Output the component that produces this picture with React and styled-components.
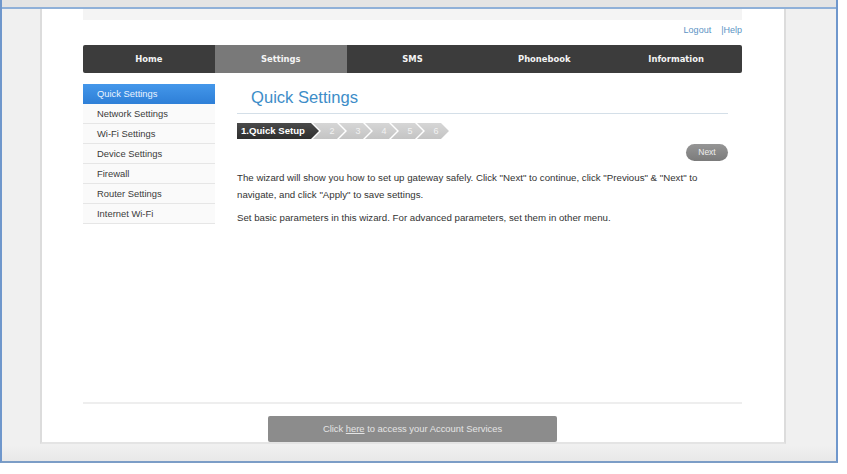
import React from "react";
import styled, { createGlobalStyle } from "styled-components";

const GlobalStyle = createGlobalStyle`
  html, body {
    margin: 0;
    padding: 0;
    background: #ffffff;
    font-family: "Liberation Sans", Arial, sans-serif;
  }
`;

const navItems = ["Home", "Settings", "SMS", "Phonebook", "Information"];
const sideItems = [
  "Quick Settings",
  "Network Settings",
  "Wi-Fi Settings",
  "Device Settings",
  "Firewall",
  "Router Settings",
  "Internet Wi-Fi",
];
const steps = ["2", "3", "4", "5", "6"];

const App = () => {
  return (
    <>
      <GlobalStyle />
      <Frame>
        <TopStrip />
        <Body>
          <Gutter side="left" />
          <Page>
            <HeaderStrip />
            <UserLinks>
              <a>Logout</a>
              <a>|Help</a>
            </UserLinks>
            <NavBar>
              {navItems.map((item) => (
                <NavTab key={item} active={item === "Settings"}>
                  {item}
                </NavTab>
              ))}
            </NavBar>
            <Main>
              <SideMenu>
                {sideItems.map((item, i) => (
                  <SideItem key={item} active={i === 0}>
                    {item}
                  </SideItem>
                ))}
              </SideMenu>
              <Content>
                <Title>Quick Settings</Title>
                <Steps>
                  <FirstStep>1.Quick Setup</FirstStep>
                  {steps.map((s) => (
                    <Step key={s}>{s}</Step>
                  ))}
                </Steps>
                <ButtonRow>
                  <NextButton>Next</NextButton>
                </ButtonRow>
                <Text>
                  The wizard will show you how to set up gateway safely. Click "Next" to continue, click
                  "Previous" &amp; "Next" to navigate, and click "Apply" to save settings.
                </Text>
                <Text>Set basic parameters in this wizard. For advanced parameters, set them in other menu.</Text>
              </Content>
            </Main>
            <Footer>
              <AccountButton>
                Click <u>here</u> to access your Account Services
              </AccountButton>
            </Footer>
          </Page>
          <Gutter />
        </Body>
        <BottomBand />
      </Frame>
    </>
  );
};

const Frame = styled.div`
  width: 834px;
  height: 461px;
  border-left: 2px solid #6f97cc;
  border-right: 2px solid #6f97cc;
  border-bottom: 2px solid #7c9dc6;
  background: #f0f0f0;
  display: flex;
  flex-direction: column;
  overflow: hidden;
`;

const TopStrip = styled.div`
  height: 7px;
  background: #e4e4e4;
  border-bottom: 2px solid #8fb0d8;
`;

const Body = styled.div`
  display: flex;
  flex: 1;
`;

const Gutter = styled.div`
  flex: ${({ side }) => (side === "left" ? "0 0 38px" : "1")};
  background: #f0f0f0;
`;

const Page = styled.div`
  width: 746px;
  height: 435px;
  background: #ffffff;
  border-left: 2px solid #dcdcdc;
  border-right: 2px solid #dcdcdc;
  border-bottom: 2px solid #e4e4e4;
  padding: 0 42px 0 41px;
  box-sizing: border-box;
  display: flex;
  flex-direction: column;
`;

const HeaderStrip = styled.div`
  height: 11px;
  background: #f4f4f4;
`;

const UserLinks = styled.div`
  display: flex;
  justify-content: flex-end;
  gap: 10px;
  height: 16px;
  margin-top: 2px;
  font-size: 9px;
  line-height: 16px;
  color: #5b93c4;
`;

const NavBar = styled.div`
  display: flex;
  height: 28px;
  margin-top: 7px;
  background: #3c3c3c;
  border-radius: 2px;
  overflow: hidden;
`;

const NavTab = styled.div`
  flex: 1;
  display: flex;
  align-items: center;
  justify-content: center;
  background: ${({ active }) => (active ? "#797979" : "transparent")};
  color: #f4f4f4;
  font-family: "DejaVu Sans", Verdana, sans-serif;
  font-weight: bold;
  font-size: 8.4px;
`;

const Main = styled.div`
  display: flex;
  gap: 22px;
  margin-top: 11px;
`;

const SideMenu = styled.div`
  width: 132px;
  flex-shrink: 0;
  display: flex;
  flex-direction: column;
`;

const SideItem = styled.div`
  height: 20px;
  box-sizing: border-box;
  padding-left: 14px;
  line-height: 19px;
  font-size: 9.4px;
  color: ${({ active }) => (active ? "#eaf3ff" : "#3a3a3a")};
  background: ${({ active }) =>
    active ? "linear-gradient(#4497ea, #2f80d8)" : "#fafafa"};
  border-bottom: 1px solid ${({ active }) => (active ? "#2f80d8" : "#e6e6e6")};
`;

const Content = styled.div`
  width: 491px;
  display: flex;
  flex-direction: column;
`;

const Title = styled.div`
  font-size: 16.6px;
  color: #3d8dc8;
  padding-left: 14px;
  height: 29px;
  line-height: 28px;
  border-bottom: 1px solid #d4dfe8;
`;

const Steps = styled.div`
  display: flex;
  margin-top: 9px;
  height: 16px;
`;

const FirstStep = styled.div`
  height: 16px;
  padding: 0 14px 0 4px;
  background: linear-gradient(#4a4a4a, #2e2e2e);
  color: #ffffff;
  font-weight: bold;
  font-size: 9.6px;
  line-height: 16px;
  clip-path: polygon(0 0, calc(100% - 8px) 0, 100% 50%, calc(100% - 8px) 100%, 0 100%);
`;

const Step = styled.div`
  width: 32px;
  height: 16px;
  margin-left: -6px;
  padding-left: 6px;
  box-sizing: border-box;
  background: linear-gradient(#d6d6d6, #c4c4c4);
  color: #f2f2f2;
  font-size: 9px;
  line-height: 16px;
  text-align: center;
  clip-path: polygon(0 0, calc(100% - 8px) 0, 100% 50%, calc(100% - 8px) 100%, 0 100%, 8px 50%);
`;

const ButtonRow = styled.div`
  display: flex;
  justify-content: flex-end;
  margin-top: 5px;
`;

const NextButton = styled.div`
  width: 42px;
  height: 17px;
  border-radius: 9px;
  background: linear-gradient(#959595, #7b7b7b);
  color: #eeeeee;
  font-size: 8.5px;
  line-height: 17px;
  text-align: center;
`;

const Text = styled.p`
  margin: 8px 0 0;
  font-size: 9.7px;
  line-height: 17px;
  color: #333333;
  & + & {
    margin-top: 6px;
  }
`;

const Footer = styled.div`
  margin-top: auto;
  border-top: 2px solid #eeeeee;
  height: 40px;
  box-sizing: border-box;
  padding-top: 12px;
  display: flex;
  justify-content: center;
`;

const AccountButton = styled.div`
  width: 289px;
  height: 26px;
  background: #8c8c8c;
  border-radius: 2px;
  color: #e4e4e4;
  font-size: 9.4px;
  line-height: 26px;
  text-align: center;
`;

const BottomBand = styled.div`
  height: 15px;
  background: linear-gradient(#f0f0f0, #e8e8e8);
`;

export default App;
